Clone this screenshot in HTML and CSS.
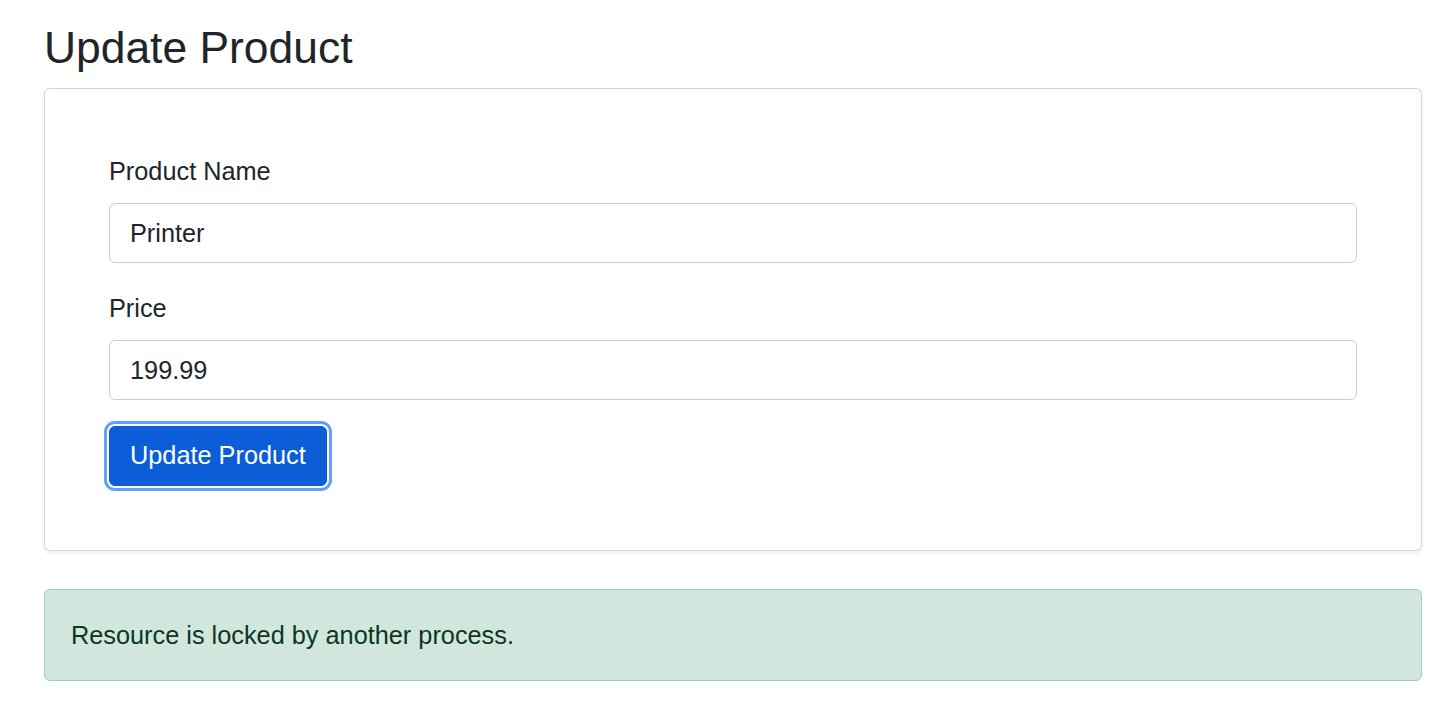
FILE: index.html
```html
<!DOCTYPE html>
<html lang="en">
<head>
<meta charset="utf-8">
<title>Update Product</title>
<link rel="stylesheet" href="styles.css">
</head>
<body>
<div class="container">
  <h3 class="title">Update Product</h3>
  <div class="card">
    <form class="form">
      <div class="field">
        <label class="label" for="name">Product Name</label>
        <input class="input" id="name" type="text" value="Printer">
      </div>
      <div class="field">
        <label class="label" for="price">Price</label>
        <input class="input" id="price" type="text" value="199.99">
      </div>
      <div>
        <button type="button" class="btn">Update Product</button>
      </div>
    </form>
  </div>
  <div class="alert">Resource is locked by another process.</div>
</div>
</body>
</html>
```
FILE: styles.css
```css
* { box-sizing: border-box; }
html, body { margin: 0; padding: 0; background: #fff; }
body {
  font-family: "Liberation Sans", Arial, sans-serif;
  font-size: 25.3px;
  line-height: 1.5;
  color: #212529;
}
.container {
  padding: 21px 34px 0 44px;
}
.title {
  margin: 0 0 14px 0;
  font-size: 44.4px;
  font-weight: 400;
  line-height: 53px;
}
.card {
  border: 1px solid rgba(0,0,0,0.16);
  border-radius: 6px;
  box-shadow: 0 2px 4px rgba(0,0,0,0.075);
  padding: 63px 64px 64px 64px;
  background: #fff;
}
.form { display: flex; flex-direction: column; }
.field { display: flex; flex-direction: column; margin-bottom: 26px; }
.label { line-height: 38px; margin-bottom: 13px; }
.input {
  height: 60px;
  border: 1px solid #c9ced6;
  border-radius: 6px;
  padding: 0 20px;
  font: inherit;
  color: #212529;
  background: #fff;
  outline: none;
}
.btn {
  height: 60px;
  padding: 0 20px;
  font: inherit;
  color: #fff;
  background: #0b5ed7;
  border: 1px solid #0a58ca;
  border-radius: 6px;
  box-shadow: 0 0 0 2px #fff, 0 0 0 5px #5ea1f6;
  cursor: pointer;
}
.alert {
  margin-top: 38px;
  border: 1px solid #a3cfbb;
  border-radius: 6px;
  background: #d1e7dd;
  color: #0a3622;
  padding: 26px 26px;
  line-height: 38px;
}
```
